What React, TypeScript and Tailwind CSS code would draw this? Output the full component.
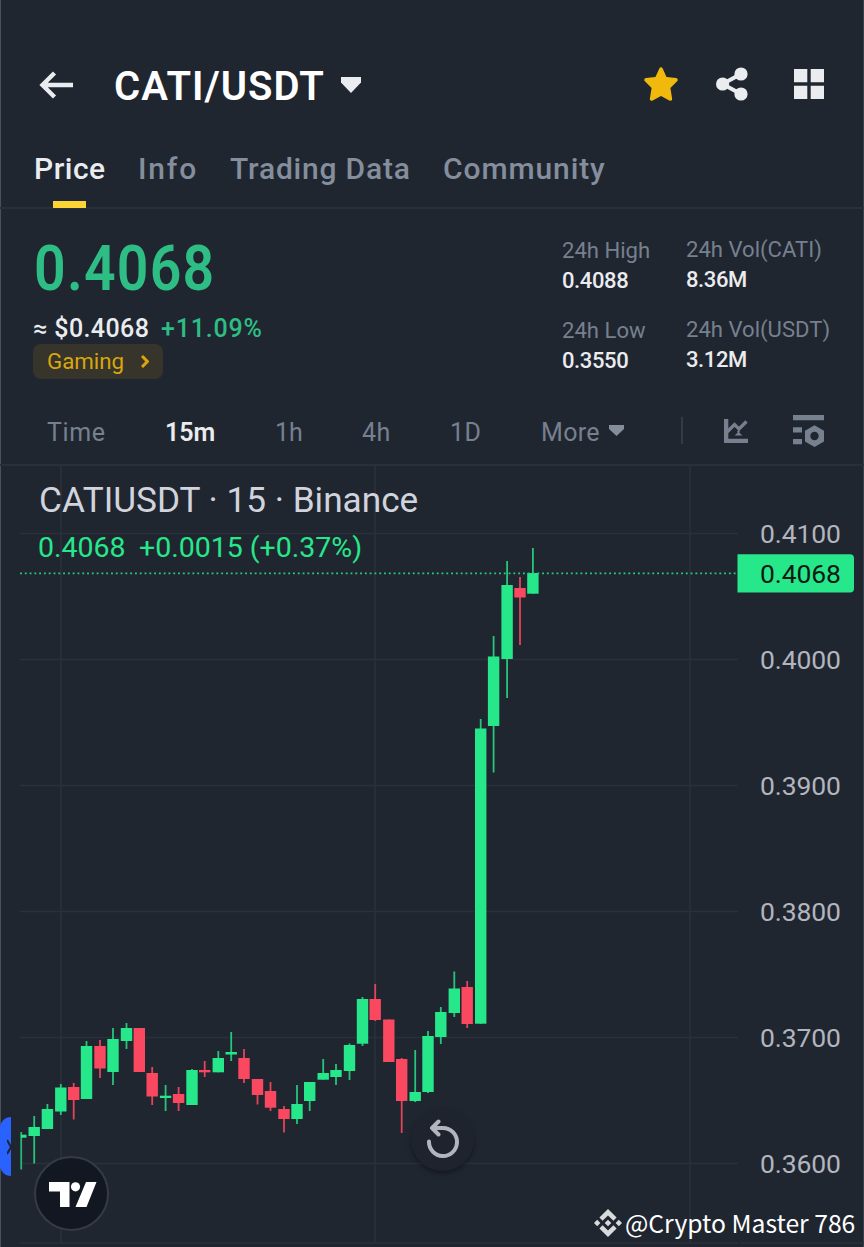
import React from 'react';

interface Candle {
  x: number;
  high: number;
  low: number;
  top: number;
  bottom: number;
  up: boolean;
}

const UP = '#26e88b';
const DOWN = '#f9485f';

// x, wick top, wick bottom, body top, body bottom, rising (1) or falling (0)
const rawCandles = [
  [34.2, 1116, 1163.5, 1127, 1136, 1],
  [47.4, 1104, 1129, 1109, 1129, 1],
  [60.8, 1084, 1115, 1087.5, 1111.5, 1],
  [73.7, 1083, 1119.5, 1087, 1100, 0],
  [86.5, 1041, 1099, 1046, 1099, 1],
  [100, 1040, 1078, 1046, 1068.5, 0],
  [113, 1028, 1085, 1039, 1072, 1],
  [126.5, 1023, 1049, 1028, 1041, 1],
  [139.3, 1028, 1072, 1028, 1072, 0],
  [152.2, 1067, 1105, 1073, 1096.5, 0],
  [165.6, 1085, 1111, 1095.7, 1098, 1],
  [178.6, 1087, 1111, 1094, 1103, 0],
  [192, 1069, 1105, 1070, 1105, 1],
  [204.7, 1061, 1077, 1070, 1072.3, 0],
  [218.3, 1051, 1072.3, 1058, 1072.3, 1],
  [231.2, 1032, 1061, 1052, 1054.5, 1],
  [244, 1049, 1083, 1058, 1079, 0],
  [257.5, 1079, 1104.5, 1079, 1095, 0],
  [270.5, 1082, 1111, 1091, 1107.7, 0],
  [284, 1106, 1132.5, 1109, 1119, 0],
  [297, 1085, 1124, 1104, 1119, 1],
  [309.7, 1082, 1111, 1082, 1101, 1],
  [323.2, 1059, 1079.7, 1073, 1079.7, 1],
  [336, 1064, 1085, 1070, 1077, 1],
  [349.5, 1043.5, 1080, 1045, 1071, 1],
  [362.5, 997, 1046, 999, 1043.7, 1],
  [375.2, 984, 1021, 999, 1020, 0],
  [388.8, 1019.5, 1062, 1019.5, 1062, 0],
  [401.7, 1058, 1133, 1059, 1101, 0],
  [415.2, 1050, 1102, 1092, 1101, 1],
  [428, 1031, 1093, 1036, 1092, 1],
  [440.8, 1007, 1044, 1012, 1037, 1],
  [454.3, 971.5, 1017, 988.5, 1013, 1],
  [467.2, 981, 1028, 987, 1024, 0],
  [480.7, 719, 1023.7, 728.5, 1023.7, 1],
  [493.6, 636, 772.5, 656.5, 726, 1],
  [507.1, 561, 698, 585, 659, 1],
  [520, 577, 645, 588, 597.5, 0],
  [532.9, 548, 593.7, 573, 593.7, 1],
];

const candles: Candle[] = rawCandles.map(([x, high, low, top, bottom, up]) => ({
  x,
  high,
  low,
  top,
  bottom,
  up: up === 1,
}));

const priceLevels = [
  { label: '0.4100', y: 533.5 },
  { label: '0.4000', y: 659.5 },
  { label: '0.3900', y: 785.5 },
  { label: '0.3800', y: 911.5 },
  { label: '0.3700', y: 1037.5 },
  { label: '0.3600', y: 1163.5 },
];

function Header() {
  return (
    <header className="flex h-[135px] items-center pt-[34px] pr-[40px] pl-[39px]">
      <svg className="h-[28px] w-[34px]" viewBox="0 0 34 28" fill="none" stroke="#eaecef" strokeWidth="4.4">
        <path d="M15.5 2 3.5 14l12 12M3.5 14H34" />
      </svg>
      <h1 className="ml-[41px] mt-[5px] w-[214px] whitespace-nowrap text-[40px] font-semibold leading-none tracking-[1px] text-white">
        CATI/USDT
      </h1>
      <svg className="ml-[13px] h-[16px] w-[20px]" viewBox="0 0 20 16" fill="#eaecef">
        <path d="M0 0h20v5.5L10 16 0 5.5z" />
      </svg>
      <div className="-mt-px ml-auto flex items-center">
        <svg className="h-[34px] w-[34px]" viewBox="0 0 34 34" fill="#f0b90b">
          <path d="M15.3 1.4c.7-1.5 2.7-1.5 3.4 0l3.8 8.7 9.5 1c1.7.2 2.3 2 1.1 3.2L26.4 21l1.7 10.5c.3 1.7-1.3 2.7-2.8 1.9L17 29l-8.3 4.4c-1.5.8-3.1-.2-2.8-1.9L7.6 21 .9 14.3C-.3 13.100.3 11.300 2 11.100l9.500-1z" />
        </svg>
        <svg className="ml-[38px] h-[34px] w-[32px]" viewBox="0 0 32 34" fill="#eaecef">
          <path d="M25 7 6.5 17 25 27" fill="none" stroke="#eaecef" strokeWidth="4" />
          <circle cx="25" cy="7" r="6.6" />
          <circle cx="6.6" cy="17" r="6.6" />
          <circle cx="25" cy="27" r="6.6" />
        </svg>
        <svg className="ml-[46px] h-[30px] w-[30px]" viewBox="0 0 30 30" fill="#eaecef">
          <path d="M0 0h13.3v13.3H0zM16.7 0H30v13.3H16.7zM0 16.7h13.3V30H0zM16.7 16.7H30V30H16.7z" />
        </svg>
      </div>
    </header>
  );
}

function Tabs() {
  return (
    <nav className="flex h-[74px] border-b-2 border-[#2a3039] pl-[34px] text-[30px] font-medium leading-[68px] text-[#848e9c]">
      <div className="relative w-[104px] whitespace-nowrap tracking-[0.5px] text-[#eaecef]">
        Price
        <span className="absolute -bottom-px left-[19px] h-[7px] w-[33px] bg-[#fcd535]" />
      </div>
      <div className="w-[92px] whitespace-nowrap tracking-[1.8px]">Info</div>
      <div className="w-[213px] whitespace-nowrap tracking-[0.8px]">Trading Data</div>
      <div className="whitespace-nowrap tracking-[0.9px]">Community</div>
    </nav>
  );
}

function Stat({ label, value }: { label: string; value: string }) {
  return (
    <div className="h-[80px] whitespace-nowrap">
      <p className="text-[22.1px] leading-[30px] text-[#76808f]">{label}</p>
      <p className="text-[22px] font-medium leading-[32px] tracking-[-0.4px] text-[#eaecef]">{value}</p>
    </div>
  );
}

function Summary() {
  return (
    <section className="flex h-[191px] pl-[34px]">
      <div className="w-[528px] pt-[25px]">
        <p className="origin-left scale-x-[0.88] text-[63px] font-semibold leading-[70px] tracking-[1.4px] text-[#2ebd85]">
          0.4068
        </p>
        <div className="flex h-[40px] items-end whitespace-nowrap text-[25px] font-medium leading-[31px]">
          <span className="-ml-px w-[128px] tracking-[0.4px] text-[#eaecef]">≈ $0.4068</span>
          <span className="tracking-[0.8px] text-[#2ebd85]">+11.09%</span>
        </div>
        <div className="-ml-px flex h-[35px] w-[130px] items-center rounded-lg bg-[#37342b] pl-[14px] text-[22.3px] text-[#d9a60e]">
          Gaming
          <svg className="ml-auto mr-[14px] h-[13px] w-[8px]" viewBox="0 0 8 13" fill="none" stroke="currentColor" strokeWidth="3">
            <path d="m1 1 5.3 5.5L1 12" />
          </svg>
        </div>
      </div>
      <div className="w-[124px] pt-[26px]">
        <Stat label="24h High" value="0.4088" />
        <Stat label="24h Low" value="0.3550" />
      </div>
      <div className="pt-[25px]">
        <Stat label="24h Vol(CATI)" value="8.36M" />
        <Stat label="24h Vol(USDT)" value="3.12M" />
      </div>
    </section>
  );
}

function IntervalBar() {
  return (
    <div className="flex h-[66px] items-center border-b-2 border-[#2a3039] pt-[2px] pl-[47px] text-[25px] text-[#76808f]">
      <span className="w-[118px] tracking-[0.6px]">Time</span>
      <span className="w-[110px] font-semibold text-[#eaecef]">15m</span>
      <span className="w-[87px]">1h</span>
      <span className="w-[88px] tracking-[0.5px]">4h</span>
      <span className="w-[91px] tracking-[0.5px]">1D</span>
      <span className="w-[68px] tracking-[0.3px]">More</span>
      <svg className="-mt-[6px] h-[11px] w-[15px]" viewBox="0 0 15 11" fill="#848e9c">
        <path d="M0 0h15v4L7.5 11 0 4z" />
      </svg>
      <span className="ml-[57px] -mt-[6px] h-[27px] w-[2px] bg-[#343b47]" />
      <svg className="ml-[41px] -mt-[5px] h-[24px] w-[24px]" viewBox="0 0 24 24" fill="#76808f">
        <path d="M0 0h4.3v19.7H24V24H0z" />
        <path d="m3 13 7.5-7.5 4.5 4.5 7.5-7.5" fill="none" stroke="#76808f" strokeWidth="3.3" />
        <path d="m14.5 10.5 1.500 2.500-1.500 1-1.500-1zM10.500 16.500 14.500 13l4 3.500z" />
      </svg>
      <svg className="ml-[45px] -mt-[4px] h-[32px] w-[31px]" viewBox="0 0 31 32" fill="#76808f">
        <path d="M0 0h31v5.3H0zM0 12.3h9v5.2H0zM0 24h9v5.2H0z" />
        <path
          fillRule="evenodd"
          d="M21.5 10.3 31 15.7v10.8L21.5 32 12 26.5V15.7zM21.5 16.8a4.2 4.2 0 1 0 0 8.4 4.2 4.2 0 0 0 0-8.4z"
        />
      </svg>
    </div>
  );
}

function Chart() {
  return (
    <section className="relative h-[781px] overflow-hidden">
      <svg className="block h-[781px] w-[864px]" viewBox="0 466 864 781">
        {/* Grid */}
        <g stroke="#2b313b" strokeWidth="1.6">
          {priceLevels.map((level) => (
            <path key={level.label} d={`M20 ${level.y}H738`} />
          ))}
          <path d="M61 466V1242M375 466V1242M690 466V1242" />
          <path d="M20 1243H738M740 1243H864" />
        </g>

        {/* Candles */}
        <path d="M21.2 1132V1169.5" stroke="#26b673" strokeWidth="1.8" />
        <path d="M21 1134.7h5.5v3H21z" fill={UP} />
        {candles.map((c) => (
          <g key={c.x}>
            <path
              d={`M${c.x} ${c.high}V${c.low}`}
              stroke={c.up ? '#26c57b' : '#e3445a'}
              strokeWidth="1.8"
            />
            <rect x={c.x - 5.7} y={c.top} width="11.4" height={c.bottom - c.top} fill={c.up ? UP : DOWN} />
          </g>
        ))}
        <path d="M20 573.3H738" stroke="#2bc683" strokeWidth="1.8" strokeDasharray="1.9 2.89" />

        {/* Price axis */}
        <g fill="#b2b5be" fontSize="26.5" fontFamily="Roboto, sans-serif">
          {priceLevels.map((level) => (
            <text key={level.label} x="760" y={level.y + 9.5} textLength="81">
              {level.label}
            </text>
          ))}
        </g>
        <path d="M737.5 554.3H850a4 4 0 0 1 4 4V588.5a4 4 0 0 1-4 4H737.5z" fill={UP} />
        <text x="760" y="582.5" fill="#0b1a14" fontSize="26.5" fontFamily="Roboto, sans-serif" textLength="81">
          0.4068
        </text>
      </svg>

      {/* Legend */}
      <div className="absolute top-[14px] left-[39px] whitespace-nowrap">
        <p className="text-[35.2px] leading-[40px] text-[#d1d4dc]">CATIUSDT · 15 · Binance</p>
        <p className="-ml-px mt-[12px] flex text-[28.5px] leading-[32px] text-[#26e88b]">
          <span className="w-[101px]">0.4068</span>
          <span>+0.0015 (+0.37%)</span>
        </p>
      </div>

      {/* Drawing toolbar handle */}
      <div className="absolute top-[651px] left-0 flex h-[59px] w-[11px] items-center overflow-hidden rounded-l-[11px] bg-[#2962ff]">
        <svg className="ml-[7px] h-[16px] w-[6px] shrink-0" viewBox="0 0 6 16" fill="none" stroke="#1b2330" strokeWidth="2">
          <path d="m0 1 4 7-4 7" />
        </svg>
      </div>

      {/* TradingView logo */}
      <div className="absolute top-[690px] left-[34px] flex h-[75px] w-[75px] items-center justify-center rounded-full border-2 border-[#363a45] bg-[#131722]">
        <svg className="ml-[2px] mt-px h-[25px] w-[48px]" viewBox="0 0 48 25" fill="#fff">
          <path d="M0 0h20.5v25H11V9.5H0z" />
          <circle cx="26.5" cy="4.8" r="4.6" />
          <path d="M37 0h10.5L37.5 25H26.5z" />
        </svg>
      </div>

      {/* Reset button */}
      <div className="absolute top-[642px] left-[411px] flex h-[63px] w-[63px] items-center justify-center rounded-full bg-[#1f232d] shadow-[0_3px_5px_rgba(0,0,0,0.35)]">
        <svg
          className="-mt-[3px] h-[40px] w-[34px]"
          viewBox="0 0 34 40"
          fill="none"
          stroke="#b2b5be"
          strokeWidth="4"
          strokeLinecap="round"
          strokeLinejoin="round"
        >
          <path d="M3 23.500A14 14 0 1 0 17 10H6M12.500 3.500 6 10l6.500 6.500" />
        </svg>
      </div>

      {/* Watermark */}
      <div className="absolute top-[740px] left-[594px] flex h-[34px] items-center whitespace-nowrap text-white">
        <svg className="h-[28px] w-[28px]" viewBox="0 0 28 28" fill="#d9dadb">
          <path d="m14 0 8.6 8.6-3.2 3.2L14 6.4l-5.4 5.4-3.2-3.2zM14 28l8.6-8.6-3.2-3.2-5.4 5.4-5.4-5.4-3.2 3.2zM0 14l3.2-3.2L6.4 14l-3.2 3.2zM21.6 14l3.2-3.2L28 14l-3.2 3.2zM14 10.7l3.3 3.3-3.3 3.3-3.3-3.3z" />
        </svg>
        <span className="-mt-[2px] ml-[3px] font-['Noto_Sans_CJK_SC',sans-serif] text-[24.7px] leading-none">
          @Crypto Master 786
        </span>
      </div>
    </section>
  );
}

export default function App() {
  return (
    <div className="h-[1247px] w-[864px] overflow-hidden bg-[#202630] font-['Roboto',sans-serif] shadow-[inset_1px_0_#4b505a,inset_-1px_0_#3b414b]">
      <Header />
      <Tabs />
      <Summary />
      <IntervalBar />
      <Chart />
    </div>
  );
}
